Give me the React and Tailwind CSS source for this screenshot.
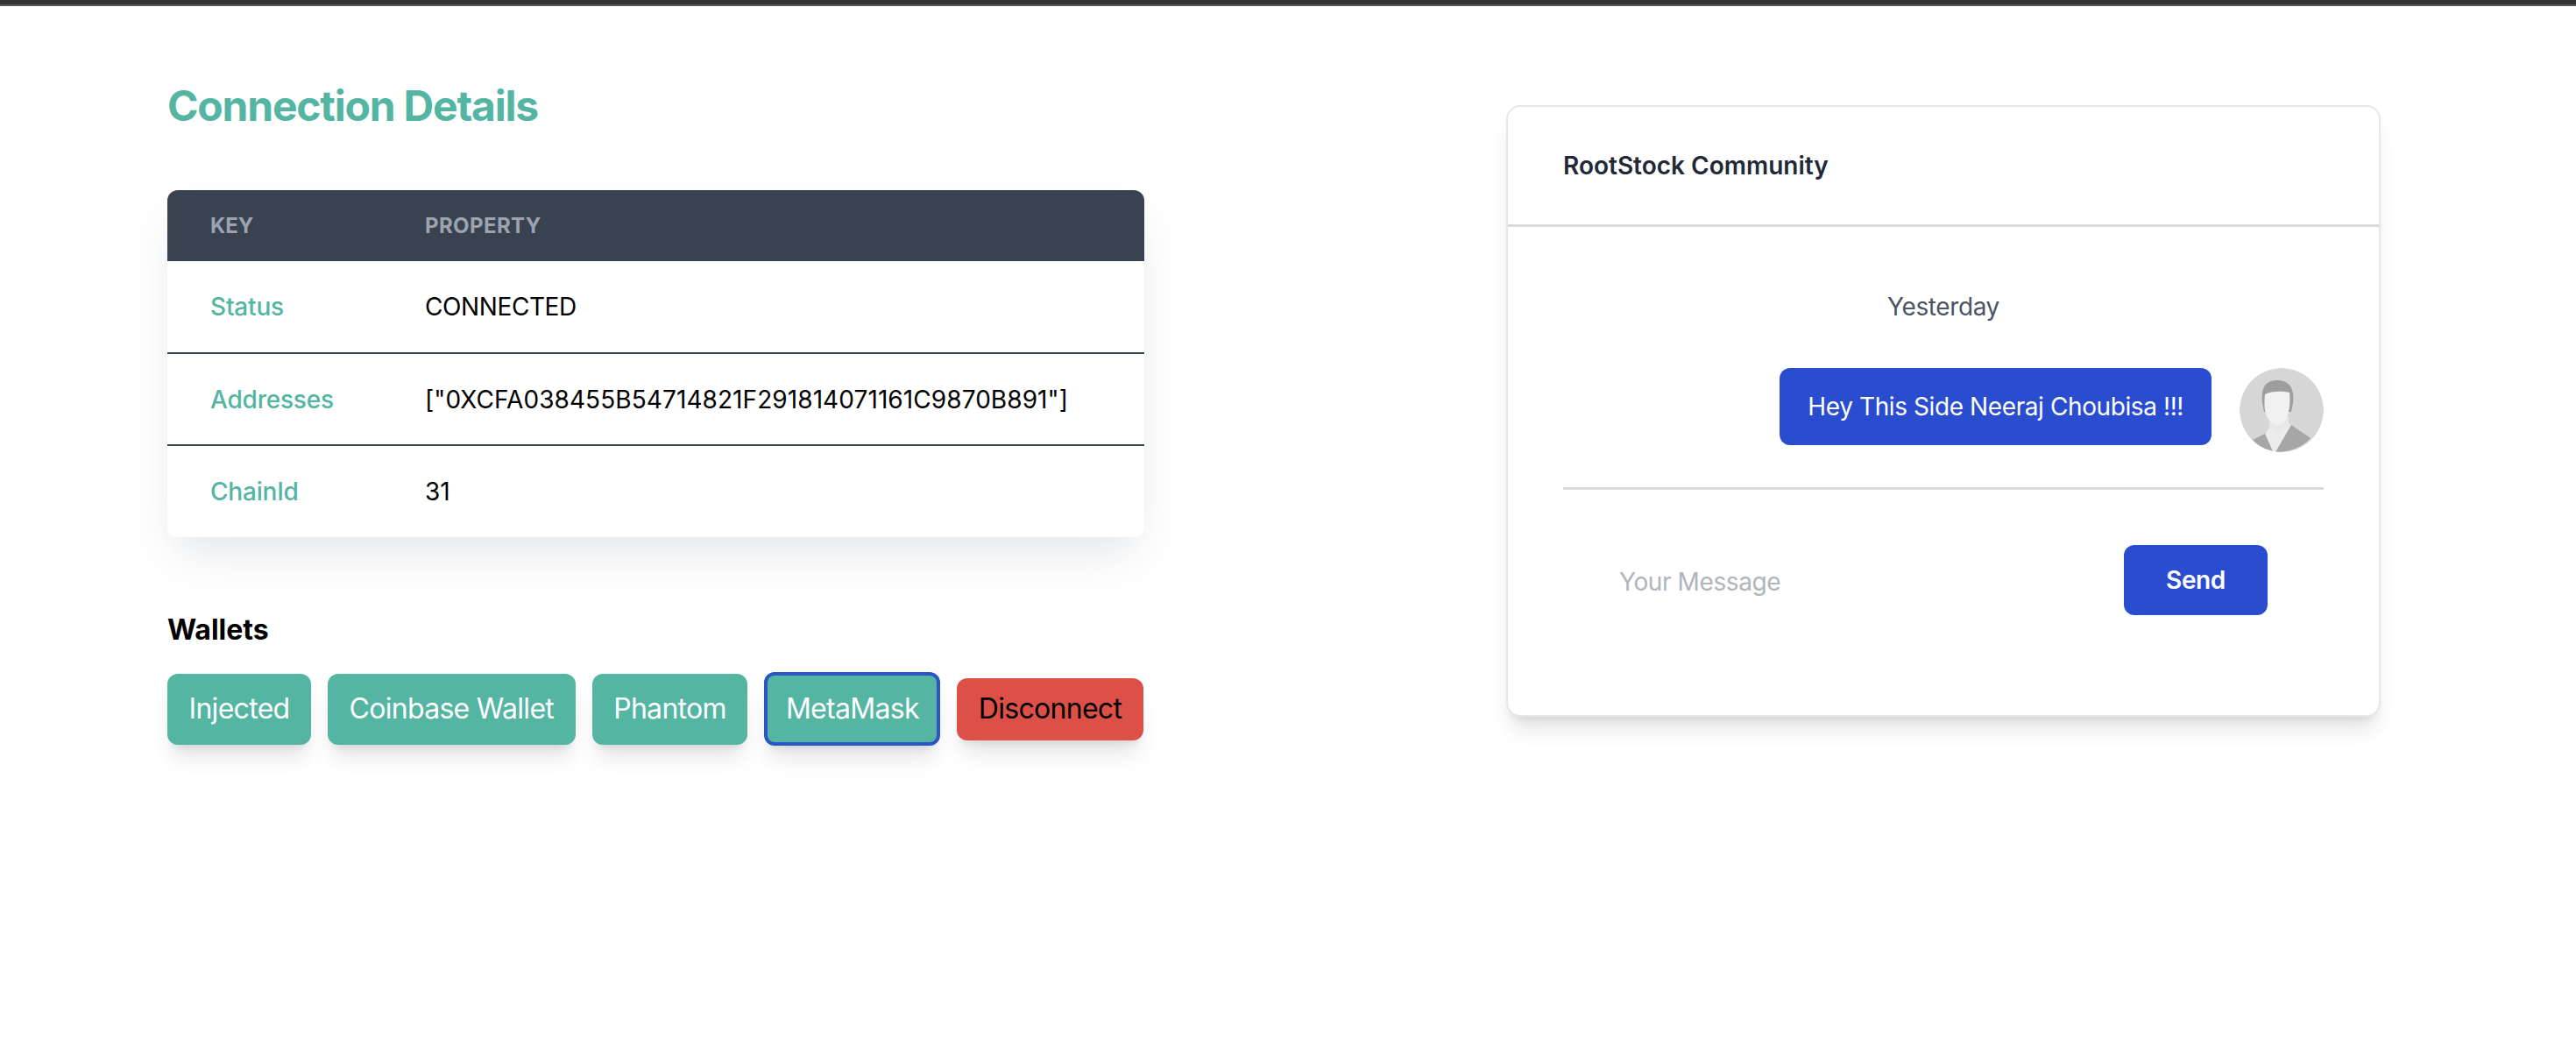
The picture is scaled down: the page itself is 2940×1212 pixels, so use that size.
const rows = [
  { key: "Status", value: "CONNECTED", track: "tracking-[-0.4px]" },
  { key: "Addresses", value: '["0XCFA038455B54714821F291814071161C9870B891"]', track: "tracking-[0.08px]" },
  { key: "ChainId", value: "31", track: "" },
];

const wallets = ["Injected", "Coinbase Wallet", "Phantom", "MetaMask"];

function Avatar() {
  return (
    <svg viewBox="0 0 96 96" className="h-24 w-24 shrink-0 rounded-full">
      <circle cx="48" cy="48" r="48" fill="#d6d6d6" />
      <path d="M26 40C24 22 30 14 43 14C56 14 63 22 61 40L59 50H28z" fill="#9e9e9e" />
      <path d="M34 58V72L44 80L56 68V56z" fill="#e8e8e8" />
      <path d="M29 30C36 26 50 26 57 28C58 40 57 52 52 60C49 64 46 65 43 65C39 65 35 62 32 57C28 50 28 40 29 30z" fill="#f1f1f1" />
      <path d="M29 76L34 68L44 76L57 64L60 66L42 96H36z" fill="#ebebeb" />
      <path d="M15 82L29 75L38 95C28 93 21 89 15 82z" fill="#a6a6a6" />
      <path d="M59 65L81 80C72 90 58 96 41 96z" fill="#a6a6a6" />
    </svg>
  );
}

function ConnectionDetails() {
  return (
    <div className="w-[1115px] shrink-0">
      <h1 className="text-5xl font-bold tracking-tight text-[#54b5a3]">Connection Details</h1>

      <div className="mt-[72px] overflow-hidden rounded-xl shadow-2xl shadow-gray-300/70">
        <table className="w-full border-collapse text-left text-[28px]">
          <thead>
            <tr className="h-[81px] bg-[#394250] text-2xl font-bold uppercase text-[#9ca3af]">
              <th className="w-[294px] pl-[49px] font-bold">Key</th>
              <th className="font-bold tracking-[0.4px]">Property</th>
            </tr>
          </thead>
          <tbody>
            {rows.map((row, i) => (
              <tr key={row.key} className={i < 2 ? "h-[105px] border-b-2 border-[#394250]" : "h-[105px]"}>
                <td className="pl-[49px] font-medium tracking-[-0.2px] text-[#54b5a3]">{row.key}</td>
                <td className={`text-black ${row.track}`}>{row.value}</td>
              </tr>
            ))}
          </tbody>
        </table>
      </div>

      <h2 className="mt-[86px] text-[32px] leading-10 font-bold text-black">Wallets</h2>

      <div className="mt-7 flex items-center gap-[19px] text-[32px] tracking-[-0.7px]">
        {wallets.map((w) => (
          <button
            key={w}
            className={
              w === "MetaMask"
                ? "h-[84px] shrink-0 whitespace-nowrap rounded-xl border-4 border-[#2a56c6] bg-[#54b5a3] px-[20.5px] text-white shadow-xl"
                : "h-[81px] shrink-0 whitespace-nowrap rounded-xl bg-[#54b5a3] px-[24.5px] text-white shadow-xl"
            }
          >
            {w}
          </button>
        ))}
        <button className="h-[71px] shrink-0 rounded-xl bg-[#dc5048] px-[24.5px] text-black shadow-xl">
          Disconnect
        </button>
      </div>
    </div>
  );
}

function ChatCard() {
  return (
    <div className="mt-[23px] w-[998px] shrink-0 rounded-2xl border-2 border-[#e5e7eb] bg-white pb-[112px] shadow-xl">
      <div className="flex h-[137px] items-center border-b-[3px] border-[#d8dadd] px-[63px] text-[28px] font-semibold text-[#1f2937]">
        RootStock Community
      </div>

      <div className="px-[63px] tracking-[-0.4px]">
        <div className="mt-[73px] text-center text-[28px] leading-9 text-[#4b5563]">Yesterday</div>

        <div className="mt-[52px] flex items-start justify-end gap-8 border-b-[3px] border-[#d8dadd] pb-[40px]">
          <div className="flex h-[88px] items-center rounded-xl bg-[#2a4dd0] px-8 text-[28px] text-white">
            Hey This Side Neeraj Choubisa !!!
          </div>
          <Avatar />
        </div>

        <div className="mt-[63px] flex items-start justify-between pl-[64px] pr-16">
          <input
            placeholder="Your Message"
            className="mt-[2px] h-[80px] w-[500px] text-[28px] outline-none placeholder:text-[#b0b5bd]"
          />
          <button className="h-20 w-[164px] rounded-xl bg-[#2a4dd0] text-[28px] font-semibold text-white">
            Send
          </button>
        </div>
      </div>
    </div>
  );
}

export default function App() {
  return (
    <div className="min-h-[1212px] bg-white font-['Inter',sans-serif]">
      <div className="h-[7px] border-b-2 border-[#555] bg-[#333]" />
      <div className="flex items-start gap-[413px] pl-[191px] pt-[90px]">
        <ConnectionDetails />
        <ChatCard />
      </div>
    </div>
  );
}
